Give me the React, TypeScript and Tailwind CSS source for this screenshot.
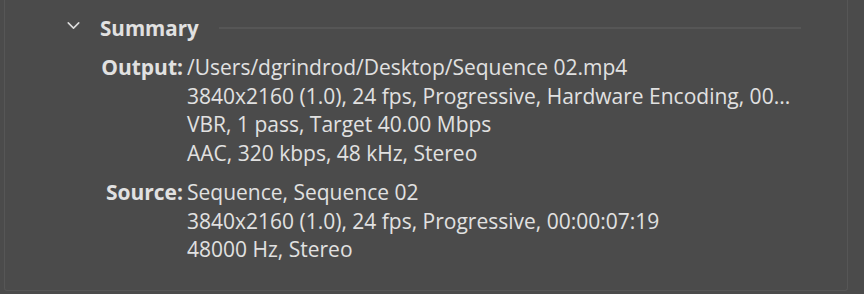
import { ChevronDown } from "lucide-react";

const rows = [
  {
    label: "Output:",
    lines: [
      "/Users/dgrindrod/Desktop/Sequence 02.mp4",
      "3840x2160 (1.0), 24 fps, Progressive, Hardware Encoding, 00...",
      "VBR, 1 pass, Target 40.00 Mbps",
      "AAC, 320 kbps, 48 kHz, Stereo",
    ],
  },
  {
    label: "Source:",
    lines: [
      "Sequence, Sequence 02",
      "3840x2160 (1.0), 24 fps, Progressive, 00:00:07:19",
      "48000 Hz, Stereo",
    ],
  },
];

export default function App() {
  return (
    <div
      className="h-[294px] w-[864px] bg-[#4b4b4b] text-[#e1e1e1]"
      style={{ fontFamily: "'Open Sans', 'Liberation Sans', sans-serif" }}
    >
      <div className="ml-[4px] mr-[16px] h-[291px] rounded-b-[3px] border-x border-b border-[#565656]">
        <div className="flex items-center pt-[15px] pl-[58px]">
          <ChevronDown className="mb-[5px] h-[21px] w-[21px] text-[#dcdcdc]" strokeWidth={1.8} />
          <span className="ml-[16px] text-[20.6px] font-bold leading-[24px]">Summary</span>
          <div className="ml-[20px] mr-[46px] h-[2px] flex-1 bg-[#565656]" />
        </div>

        <div className="mt-[12px] flex flex-col gap-[10px]">
          {rows.map((r) => (
            <div key={r.label} className="flex text-[21px] leading-[28.7px]">
              <div className="w-[182px] pr-[4px] text-right font-bold">{r.label}</div>
              <div className="flex flex-col">
                {r.lines.map((l) => (
                  <div key={l} className="whitespace-nowrap">
                    {l}
                  </div>
                ))}
              </div>
            </div>
          ))}
        </div>
      </div>
    </div>
  );
}
